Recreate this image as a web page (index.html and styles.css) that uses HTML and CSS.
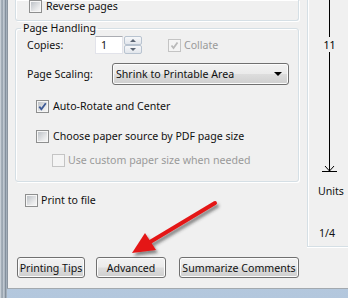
FILE: index.html
```html
<!DOCTYPE html>
<html lang="en">
<head>
    <meta charset="UTF-8">
    <title>Print</title>
    <link rel="stylesheet" href="styles.css">
</head>
<body>
    <div class="window">
        <div class="dialog">
            <div class="main">
                <div class="group group-top">
                    <label class="check reverse"><span class="cb"></span>Reverse pages</label>
                </div>

                <fieldset class="group handling">
                    <legend>Page Handling</legend>
                    <div class="row copies">
                        <span class="field-label copies-label">Copies:</span>
                        <div class="spin">
                            <span class="spin-input">1</span>
                            <span class="spin-btns">
                                <span class="spin-btn up"></span>
                                <span class="spin-btn down"></span>
                            </span>
                        </div>
                        <label class="check disabled collate">
                            <span class="cb">
                                <svg viewBox="0 0 11 11" width="11" height="11"><path d="M2.5 5.5 L4.5 8 L8.5 2.5" fill="none" stroke="#b9b9b9" stroke-width="1.8"/></svg>
                            </span>Collate
                        </label>
                    </div>
                    <div class="row scaling">
                        <span class="field-label scaling-label">Page Scaling:</span>
                        <div class="combo">
                            <span>Shrink to Printable Area</span>
                            <span class="combo-arrow"></span>
                        </div>
                    </div>
                    <label class="check option rotate">
                        <span class="cb">
                            <svg viewBox="0 0 11 11" width="11" height="11"><path d="M2.3 5.6 L4.4 8.3 L8.8 2.2" fill="none" stroke="#3d5a96" stroke-width="1.8"/></svg>
                        </span>Auto-Rotate and Center
                    </label>
                    <label class="check option source"><span class="cb"></span>Choose paper source by PDF page size</label>
                    <label class="check option disabled custom"><span class="cb"></span>Use custom paper size when needed</label>
                </fieldset>

                <label class="check print-file"><span class="cb"></span>Print to file</label>

                <div class="buttons">
                    <button class="btn tips">Printing Tips</button>
                    <button class="btn advanced">Advanced</button>
                    <button class="btn summarize">Summarize Comments</button>
                </div>
            </div>

            <div class="preview">
                <svg class="ruler" viewBox="0 0 41 173" width="41" height="173">
                    <path d="M20.5 0 V37 M20.5 52 V171 M16 166 L20.5 171 L25 166 M13 171.5 H28" fill="none" stroke="#000" stroke-width="1"/>
                    <text x="20.5" y="48.5" text-anchor="middle" class="ruler-num">11</text>
                </svg>
                <div class="units">Units</div>
                <div class="pages">1/4</div>
            </div>
        </div>

        <!-- red callout arrow pointing at Advanced -->
        <svg class="callout" width="348" height="298" viewBox="0 0 348 298">
            <defs>
                <filter id="shadow" x="-20%" y="-20%" width="140%" height="140%">
                    <feDropShadow dx="2" dy="3" stdDeviation="1.4" flood-color="#333" flood-opacity="0.55"/>
                </filter>
            </defs>
            <g filter="url(#shadow)">
                <line x1="215" y1="203" x2="150" y2="242" stroke="#e41616" stroke-width="4" stroke-linecap="round"/>
                <polygon points="132,253 145,233 156,250" fill="#e41616"/>
            </g>
        </svg>
    </div>
</body>
</html>
```

FILE: styles.css
```css
body {
    margin: 0;
    font-family: "Noto Sans", "Open Sans", sans-serif;
    font-size: 10.6px;
    color: #111;
}
.window {
    position: relative;
    width: 348px;
    height: 298px;
    overflow: hidden;
    background: linear-gradient(#cfdcea, #b3c7dd);
}
.window::before {
    content: "";
    position: absolute;
    left: 0;
    top: 0;
    width: 7px;
    height: 298px;
    background: linear-gradient(90deg, #d9dfe5, #8e9aa6 30%, #c9d1d9 55%, #7f8c99 80%, #b8c2cc);
}
.dialog {
    display: flex;
    margin-left: 7px;
    height: 289px;
    border-left: 1px solid #8b95a0;
    border-bottom: 1px solid #a3a9af;
    background: #f0f0f0;
    box-sizing: border-box;
}
.main {
    display: flex;
    flex-direction: column;
    width: 303px;
    padding: 0 8px 10px 7px;
    box-sizing: border-box;
}
.group {
    border: 1px solid #d5dfe5;
    border-radius: 3px;
    box-shadow: inset 1px 1px 0 #fff, 1px 1px 0 #fff;
}
.group-top {
    height: 21px;
    border-top: none;
    border-radius: 0 0 3px 3px;
    box-sizing: border-box;
    padding-left: 13px;
}
.handling {
    margin: 0;
    padding: 0 0 14px 0;
    min-width: 0;
}
.handling legend {
    margin-left: 5px;
    padding: 0 2px;
    line-height: 14px;
}

/* checkboxes */
.check {
    display: flex;
    align-items: center;
    gap: 4px;
    height: 13px;
    line-height: 13px;
    white-space: nowrap;
}
.cb {
    display: flex;
    align-items: center;
    justify-content: center;
    width: 13px;
    height: 13px;
    flex: none;
    box-sizing: border-box;
    border: 1px solid #8e8f8f;
    background: linear-gradient(135deg, #b7bcc2, #e8e9ea 65%, #fafafa);
    box-shadow: inset 0 0 0 1px #f6f6f6;
}
.check.disabled {
    color: #9a9a9a;
}
.check.disabled .cb {
    border-color: #c4c4c4;
    background: #f4f4f4;
    box-shadow: none;
}
.reverse .cb {
    margin-top: -1px;
}

/* rows in page handling */
.row {
    display: flex;
    align-items: center;
    padding-left: 11px;
    white-space: nowrap;
}
.field-label {
    flex: none;
}
.copies {
    height: 18px;
    margin-top: 1px;
}
.copies-label {
    width: 68px;
}
.spin {
    display: flex;
    height: 18px;
}
.spin-input {
    width: 28px;
    box-sizing: border-box;
    padding-left: 5px;
    background: #fff;
    border: 1px solid #e2e3ea;
    border-top-color: #abadb3;
    line-height: 16px;
}
.spin-btns {
    display: flex;
    flex-direction: column;
    width: 18px;
    margin-left: 1px;
}
.spin-btn {
    position: relative;
    flex: 1;
    border: 1px solid #b8c3d0;
    border-radius: 2px;
    background: linear-gradient(#f7f8fa, #e2e6ec);
}
.spin-btn::after {
    content: "";
    position: absolute;
    left: 5px;
    top: 2px;
    border-left: 3px solid transparent;
    border-right: 3px solid transparent;
}
.spin-btn.up::after {
    border-bottom: 3px solid #5c6675;
}
.spin-btn.down::after {
    border-top: 3px solid #5c6675;
}
.collate {
    margin-left: 26px;
    gap: 3px;
}
.scaling {
    margin-top: 9px;
    height: 22px;
}
.scaling-label {
    width: 85px;
}
.combo {
    display: flex;
    align-items: center;
    justify-content: space-between;
    width: 177px;
    height: 22px;
    box-sizing: border-box;
    padding: 0 6px 0 3px;
    border: 1px solid #707070;
    border-radius: 3px;
    background: linear-gradient(#f2f2f2 0%, #ebebeb 48%, #dddddd 52%, #cfcfcf 100%);
    box-shadow: inset 0 0 0 1px #fcfcfc;
}
.combo-arrow {
    border-left: 4px solid transparent;
    border-right: 4px solid transparent;
    border-top: 4px solid #000;
}
.option {
    padding-left: 20px;
}
.rotate {
    margin-top: 15px;
}
.source {
    margin-top: 17px;
}
.custom {
    margin-top: 11px;
    padding-left: 36px;
    gap: 3px;
}
.print-file {
    margin-top: 12px;
    padding-left: 10px;
    gap: 3px;
}

/* buttons */
.buttons {
    display: flex;
    margin-top: auto;
    padding-left: 2px;
}
.btn {
    height: 21px;
    padding: 0;
    white-space: nowrap;
    font-family: inherit;
    font-size: inherit;
    color: #111;
    border: 1px solid #707070;
    border-radius: 3px;
    background: linear-gradient(#f2f2f2 0%, #ebebeb 48%, #dddddd 52%, #cfcfcf 100%);
    box-shadow: inset 0 0 0 1px #fcfcfc;
}
.tips {
    width: 68px;
}
.advanced {
    width: 70px;
    margin-left: 11px;
}
.summarize {
    width: 120px;
    margin-left: 13px;
}

/* preview pane */
.preview {
    flex: 1;
    height: 246px;
    padding-left: 1px;
    border-left: 1px solid #d5dfe5;
    border-bottom: 1px solid #d5dfe5;
    box-shadow: inset 1px 0 0 #fff, 0 1px 0 #fff;
}
.ruler {
    display: block;
}
.ruler-num {
    fill: #000;
    font-size: 10.6px;
}
.units {
    margin-top: 11px;
    padding-left: 9px;
}
.pages {
    margin-top: 28px;
    padding-left: 10px;
}

.callout {
    position: absolute;
    left: 0;
    top: 0;
    pointer-events: none;
}
```
